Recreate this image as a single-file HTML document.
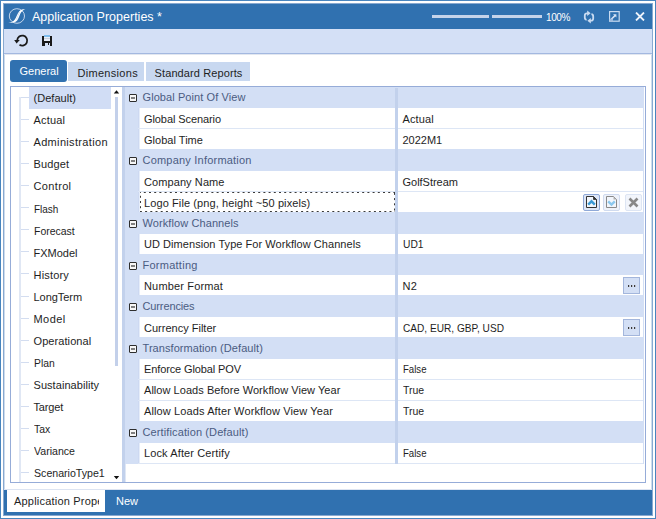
<!DOCTYPE html>
<html><head><meta charset="utf-8"><style>
html,body{margin:0;padding:0;width:656px;height:519px;overflow:hidden;background:#fff}
body{position:relative;font-family:"Liberation Sans",sans-serif;}
body div, body svg{position:absolute;box-sizing:content-box}
.t{white-space:nowrap}
</style></head><body>
<div style="left:0;top:0;width:656px;height:519px;background:#4985be"></div>
<div style="left:1px;top:1px;width:654px;height:517px;background:#ffffff;"></div>
<div style="left:3px;top:3px;width:650px;height:513px;background:#88a9d0;"></div>
<div style="left:4px;top:29px;width:648px;height:461px;background:#ffffff;"></div>
<div style="left:4px;top:54px;width:1px;height:435px;background:#cddbec;"></div>
<div style="left:651px;top:54px;width:1px;height:435px;background:#cddbec;"></div>
<div style="left:4px;top:4px;width:648px;height:25px;background:#3071b0;"></div>
<div style="left:4px;top:29px;width:648px;height:24px;background:#d4e0f6;"></div>
<div style="left:4px;top:53px;width:648px;height:1px;background:#a3b8e0;"></div>
<div style="left:4px;top:54px;width:648px;height:1px;background:#e2e7f0;"></div>
<svg style="left:0px;top:0px" width="30" height="30" viewBox="0 0 30 30">
<ellipse cx="16.9" cy="16" rx="7.6" ry="7.3" fill="none" stroke="#c4d6ec" stroke-width="1.0"/>
<path d="M8.2 22.5 C11 22.8 13.3 22 14.8 19.6 C16.3 17.2 17.3 13.6 19.3 11.2 C20.9 9.5 22.9 9.1 25.4 9.3 C23.3 9.9 22.1 10.9 21 12.6 C19.6 14.8 18.9 18.3 17.2 20.6 C15.3 22.8 12 23.1 8.2 22.5 Z" fill="#ffffff"/>
<path d="M19.6 12.2 C18.4 14 17.6 17.5 16.2 19.6" fill="none" stroke="#a9c3e2" stroke-width="0.5"/>
</svg>
<div class="t" style="left:32px;top:11.17px;font-size:12.5px;line-height:13px;color:#ffffff;">Application Properties *</div>
<div style="left:432px;top:15px;width:57px;height:3px;background:#c5d3ea;"></div>
<div style="left:492px;top:15px;width:50px;height:3px;background:#c5d3ea;"></div>
<div class="t" style="left:546px;top:11.04px;font-size:10px;line-height:13px;color:#ffffff;letter-spacing:-0.4px">100%</div>
<svg style="left:580px;top:8px" width="18" height="18" viewBox="0 0 18 18">
<path d="M8.5 5.3 L7 5.3 Q4.8 5.3 4.8 7.5 L4.8 9.6 Q4.8 11.6 6.6 11.8" fill="none" stroke="#c9dbf1" stroke-width="1.8"/>
<path d="M7.2 2.6 L10.6 5.3 L7.2 8 Z" fill="#c9dbf1"/>
<path d="M9.5 12.7 L11 12.7 Q13.2 12.7 13.2 10.5 L13.2 8.4 Q13.2 6.4 11.4 6.2" fill="none" stroke="#c9dbf1" stroke-width="1.8"/>
<path d="M10.8 10 L7.4 12.7 L10.8 15.4 Z" fill="#c9dbf1"/>
</svg>
<svg style="left:605px;top:8px" width="18" height="18" viewBox="0 0 18 18">
<rect x="4.6" y="3.6" width="9.6" height="9.6" fill="none" stroke="#c9dbf1" stroke-width="1.2"/>
<path d="M6.3 11.3 L10.2 7.4" stroke="#d5e3f5" stroke-width="1.6"/>
<path d="M8 6.2 L11.4 6.2 L11.4 9.6 Z" fill="#d5e3f5"/>
<rect x="4.6" y="10.8" width="3.4" height="2.4" fill="#9ebbdf"/>
</svg>
<svg style="left:635px;top:12px" width="10" height="9" viewBox="0 0 10 9">
<path d="M1 0.5 L9 8.5 M9 0.5 L1 8.5" stroke="#eef3fa" stroke-width="1.8"/>
</svg>
<svg style="left:13px;top:33px" width="17" height="15" viewBox="0 0 17 15">
<path d="M4.2 7.2 A5 5 0 1 1 6.5 11.8" fill="none" stroke="#1a1a1a" stroke-width="1.8"/>
<path d="M1.2 7 L6.8 7 L3.6 10.6 Z" fill="#1a1a1a"/>
</svg>
<div style="left:42px;top:36px;width:10px;height:10px;background:#1a1a1a"></div>
<div style="left:44px;top:35px;width:6px;height:2px;background:#7fbcec"></div>
<div style="left:44px;top:37px;width:6px;height:4px;background:#e8eef8"></div>
<div style="left:45px;top:43px;width:5px;height:3px;background:#d4e0f6"></div>
<div style="left:48px;top:43px;width:1px;height:2px;background:#1a1a1a"></div>
<div style="left:44px;top:38px;width:6px;height:1px;background:#c8d0dc"></div>
<div style="left:10px;top:60px;width:57px;height:22px;background:#3071b0;border-radius:3px"></div>
<div class="t" style="left:19.5px;top:64.99px;font-size:11px;line-height:13px;color:#ffffff;">General</div>
<div style="left:68px;top:62px;width:76px;height:19px;background:#c8d8f0;"></div>
<div class="t" style="left:77.5px;top:66.99px;font-size:11px;line-height:13px;color:#1e1e1e;letter-spacing:0.3px">Dimensions</div>
<div style="left:146px;top:62px;width:104px;height:19px;background:#c8d8f0;"></div>
<div class="t" style="left:154.6px;top:66.99px;font-size:11px;line-height:13px;color:#1e1e1e;letter-spacing:0.1px">Standard Reports</div>
<div style="left:10px;top:86px;width:634px;height:395px;border:1px solid #96acd8;background:#fff"></div>
<div style="left:29px;top:87px;width:82px;height:22px;background:#d1ddf5;"></div>
<div style="left:19px;top:97px;width:2px;height:385px;background:#e0e7f4;"></div>
<div style="left:21px;top:97px;width:8px;height:1px;background:#d3ddf0;"></div>
<div class="t" style="left:33.5px;top:92px;font-size:11px;line-height:13px;letter-spacing:0.037px;color:#1e1e1e;">(Default)</div>
<div style="left:21px;top:119px;width:8px;height:1px;background:#d3ddf0;"></div>
<div class="t" style="left:33.5px;top:114px;font-size:11px;line-height:13px;letter-spacing:0.180px;color:#1e1e1e;">Actual</div>
<div style="left:21px;top:141px;width:8px;height:1px;background:#d3ddf0;"></div>
<div class="t" style="left:33.5px;top:136px;font-size:11px;line-height:13px;letter-spacing:0.331px;color:#1e1e1e;">Administration</div>
<div style="left:21px;top:163px;width:8px;height:1px;background:#d3ddf0;"></div>
<div class="t" style="left:33.5px;top:158px;font-size:11px;line-height:13px;letter-spacing:0.120px;color:#1e1e1e;">Budget</div>
<div style="left:21px;top:185px;width:8px;height:1px;background:#d3ddf0;"></div>
<div class="t" style="left:33.5px;top:180px;font-size:11px;line-height:13px;letter-spacing:0.350px;color:#1e1e1e;">Control</div>
<div style="left:21px;top:207px;width:8px;height:1px;background:#d3ddf0;"></div>
<div class="t" style="left:33.5px;top:203px;font-size:11px;line-height:13px;letter-spacing:0.000px;transform:scaleX(0.9074);transform-origin:0 0;color:#1e1e1e;">Flash</div>
<div style="left:21px;top:229px;width:8px;height:1px;background:#d3ddf0;"></div>
<div class="t" style="left:33.5px;top:225px;font-size:11px;line-height:13px;letter-spacing:0.000px;transform:scaleX(0.9512);transform-origin:0 0;color:#1e1e1e;">Forecast</div>
<div style="left:21px;top:251px;width:8px;height:1px;background:#d3ddf0;"></div>
<div class="t" style="left:33.5px;top:247px;font-size:11px;line-height:13px;letter-spacing:0.000px;color:#1e1e1e;">FXModel</div>
<div style="left:21px;top:273px;width:8px;height:1px;background:#d3ddf0;"></div>
<div class="t" style="left:33.5px;top:269px;font-size:11px;line-height:13px;letter-spacing:0.183px;color:#1e1e1e;">History</div>
<div style="left:21px;top:296px;width:8px;height:1px;background:#d3ddf0;"></div>
<div class="t" style="left:33.5px;top:291px;font-size:11px;line-height:13px;letter-spacing:-0.043px;color:#1e1e1e;">LongTerm</div>
<div style="left:21px;top:318px;width:8px;height:1px;background:#d3ddf0;"></div>
<div class="t" style="left:33.5px;top:313px;font-size:11px;line-height:13px;letter-spacing:0.450px;color:#1e1e1e;">Model</div>
<div style="left:21px;top:340px;width:8px;height:1px;background:#d3ddf0;"></div>
<div class="t" style="left:33.5px;top:335px;font-size:11px;line-height:13px;letter-spacing:0.080px;color:#1e1e1e;">Operational</div>
<div style="left:21px;top:362px;width:8px;height:1px;background:#d3ddf0;"></div>
<div class="t" style="left:33.5px;top:357px;font-size:11px;line-height:13px;letter-spacing:0.000px;transform:scaleX(0.9409);transform-origin:0 0;color:#1e1e1e;">Plan</div>
<div style="left:21px;top:384px;width:8px;height:1px;background:#d3ddf0;"></div>
<div class="t" style="left:33.5px;top:379px;font-size:11px;line-height:13px;letter-spacing:0.054px;color:#1e1e1e;">Sustainability</div>
<div style="left:21px;top:406px;width:8px;height:1px;background:#d3ddf0;"></div>
<div class="t" style="left:33.5px;top:401px;font-size:11px;line-height:13px;letter-spacing:-0.140px;color:#1e1e1e;">Target</div>
<div style="left:21px;top:428px;width:8px;height:1px;background:#d3ddf0;"></div>
<div class="t" style="left:33.5px;top:423px;font-size:11px;line-height:13px;letter-spacing:0.000px;transform:scaleX(0.9471);transform-origin:0 0;color:#1e1e1e;">Tax</div>
<div style="left:21px;top:450px;width:8px;height:1px;background:#d3ddf0;"></div>
<div class="t" style="left:33.5px;top:445px;font-size:11px;line-height:13px;letter-spacing:0.000px;transform:scaleX(0.9628);transform-origin:0 0;color:#1e1e1e;">Variance</div>
<div style="left:21px;top:472px;width:8px;height:1px;background:#d3ddf0;"></div>
<div class="t" style="left:33.5px;top:467px;font-size:11px;line-height:13px;letter-spacing:0.000px;transform:scaleX(0.9644);transform-origin:0 0;color:#1e1e1e;">ScenarioType1</div>
<svg style="left:113px;top:89px" width="7" height="6" viewBox="0 0 7 6"><path d="M0.8 4.6 L3.5 1.3 L6.2 4.6 Z" fill="#111"/></svg>
<div style="left:115px;top:97px;width:3px;height:269px;background:#c3d0ea;"></div>
<svg style="left:113px;top:475px" width="7" height="6" viewBox="0 0 7 6"><path d="M0.8 1 L6.2 1 L3.5 4.3 Z" fill="#111"/></svg>
<div style="left:122px;top:87px;width:3px;height:395px;background:#c2d1ec;"></div>
<div style="left:125px;top:87px;width:519px;height:377px;background:#d3dff5;"></div>
<div style="left:395px;top:88px;width:3px;height:376px;background:#c2d1ec;"></div>
<div style="left:129px;top:94px;width:6px;height:6px;border:1px solid #2e2e2e;border-radius:1px;background:#f6f6f6"></div>
<div style="left:131px;top:97px;width:4px;height:2px;background:#808080;"></div>
<div class="t" style="left:142.5px;top:91px;font-size:11px;line-height:13px;letter-spacing:0.084px;color:#4b5c82;">Global Point Of View</div>
<div style="left:140px;top:108px;width:255px;height:20px;background:#ffffff;"></div>
<div style="left:138px;top:128px;width:257px;height:1px;background:#dde6f5;"></div>
<div style="left:398px;top:128px;width:245px;height:1px;background:#dde6f5;"></div>
<div style="left:138px;top:108px;width:1px;height:20px;background:#cdd9f2;"></div>
<div style="left:139px;top:108px;width:1px;height:20px;background:#e6edf9;"></div>
<div style="left:398px;top:108px;width:245px;height:20px;background:#ffffff;"></div>
<div class="t" style="left:144px;top:113px;font-size:11px;line-height:13px;letter-spacing:-0.086px;color:#1e1e1e;">Global Scenario</div>
<div class="t" style="left:402.5px;top:113px;font-size:11px;line-height:13px;letter-spacing:0.120px;color:#1e1e1e;">Actual</div>
<div style="left:140px;top:129px;width:255px;height:20px;background:#ffffff;"></div>
<div style="left:138px;top:129px;width:1px;height:20px;background:#cdd9f2;"></div>
<div style="left:139px;top:129px;width:1px;height:20px;background:#e6edf9;"></div>
<div style="left:398px;top:129px;width:245px;height:20px;background:#ffffff;"></div>
<div class="t" style="left:144px;top:134px;font-size:11px;line-height:13px;letter-spacing:0.020px;color:#1e1e1e;">Global Time</div>
<div class="t" style="left:402.5px;top:134px;font-size:11px;line-height:13px;letter-spacing:-0.020px;color:#1e1e1e;">2022M1</div>
<div style="left:129px;top:157px;width:6px;height:6px;border:1px solid #2e2e2e;border-radius:1px;background:#f6f6f6"></div>
<div style="left:131px;top:160px;width:4px;height:2px;background:#808080;"></div>
<div class="t" style="left:142.5px;top:154px;font-size:11px;line-height:13px;letter-spacing:0.211px;color:#4b5c82;">Company Information</div>
<div style="left:140px;top:171px;width:255px;height:20px;background:#ffffff;"></div>
<div style="left:138px;top:191px;width:257px;height:1px;background:#dde6f5;"></div>
<div style="left:398px;top:191px;width:245px;height:1px;background:#dde6f5;"></div>
<div style="left:138px;top:171px;width:1px;height:20px;background:#cdd9f2;"></div>
<div style="left:139px;top:171px;width:1px;height:20px;background:#e6edf9;"></div>
<div style="left:398px;top:171px;width:245px;height:20px;background:#ffffff;"></div>
<div class="t" style="left:144px;top:176px;font-size:11px;line-height:13px;letter-spacing:0.091px;color:#1e1e1e;">Company Name</div>
<div class="t" style="left:402.5px;top:176px;font-size:11px;line-height:13px;letter-spacing:-0.022px;color:#1e1e1e;">GolfStream</div>
<div style="left:140px;top:192px;width:255px;height:20px;background:#ffffff;"></div>
<div style="left:138px;top:192px;width:1px;height:20px;background:#cdd9f2;"></div>
<div style="left:139px;top:192px;width:1px;height:20px;background:#e6edf9;"></div>
<div style="left:398px;top:192px;width:245px;height:20px;background:#ffffff;"></div>
<div class="t" style="left:144px;top:197px;font-size:11px;line-height:13px;letter-spacing:0.100px;color:#1e1e1e;">Logo File (png, height ~50 pixels)</div>
<div style="left:129px;top:220px;width:6px;height:6px;border:1px solid #2e2e2e;border-radius:1px;background:#f6f6f6"></div>
<div style="left:131px;top:223px;width:4px;height:2px;background:#808080;"></div>
<div class="t" style="left:142.5px;top:217px;font-size:11px;line-height:13px;letter-spacing:0.094px;color:#4b5c82;">Workflow Channels</div>
<div style="left:140px;top:234px;width:255px;height:20px;background:#ffffff;"></div>
<div style="left:138px;top:234px;width:1px;height:20px;background:#cdd9f2;"></div>
<div style="left:139px;top:234px;width:1px;height:20px;background:#e6edf9;"></div>
<div style="left:398px;top:234px;width:245px;height:20px;background:#ffffff;"></div>
<div class="t" style="left:144px;top:238px;font-size:11px;line-height:13px;letter-spacing:0.050px;color:#1e1e1e;">UD Dimension Type For Workflow Channels</div>
<div class="t" style="left:402.5px;top:238px;font-size:11px;line-height:13px;letter-spacing:0.000px;transform:scaleX(0.9318);transform-origin:0 0;color:#1e1e1e;">UD1</div>
<div style="left:129px;top:262px;width:6px;height:6px;border:1px solid #2e2e2e;border-radius:1px;background:#f6f6f6"></div>
<div style="left:131px;top:265px;width:4px;height:2px;background:#808080;"></div>
<div class="t" style="left:142.5px;top:259px;font-size:11px;line-height:13px;letter-spacing:0.256px;color:#4b5c82;">Formatting</div>
<div style="left:140px;top:275px;width:255px;height:20px;background:#ffffff;"></div>
<div style="left:138px;top:275px;width:1px;height:20px;background:#cdd9f2;"></div>
<div style="left:139px;top:275px;width:1px;height:20px;background:#e6edf9;"></div>
<div style="left:398px;top:275px;width:245px;height:20px;background:#ffffff;"></div>
<div class="t" style="left:144px;top:280px;font-size:11px;line-height:13px;letter-spacing:0.158px;color:#1e1e1e;">Number Format</div>
<div class="t" style="left:402.5px;top:280px;font-size:11px;line-height:13px;letter-spacing:0.200px;color:#1e1e1e;">N2</div>
<div style="left:129px;top:303px;width:6px;height:6px;border:1px solid #2e2e2e;border-radius:1px;background:#f6f6f6"></div>
<div style="left:131px;top:306px;width:4px;height:2px;background:#808080;"></div>
<div class="t" style="left:142.5px;top:300px;font-size:11px;line-height:13px;letter-spacing:-0.122px;color:#4b5c82;">Currencies</div>
<div style="left:140px;top:317px;width:255px;height:20px;background:#ffffff;"></div>
<div style="left:138px;top:317px;width:1px;height:20px;background:#cdd9f2;"></div>
<div style="left:139px;top:317px;width:1px;height:20px;background:#e6edf9;"></div>
<div style="left:398px;top:317px;width:245px;height:20px;background:#ffffff;"></div>
<div class="t" style="left:144px;top:322px;font-size:11px;line-height:13px;letter-spacing:0.007px;color:#1e1e1e;">Currency Filter</div>
<div class="t" style="left:402.5px;top:322px;font-size:11px;line-height:13px;letter-spacing:0.000px;transform:scaleX(0.9191);transform-origin:0 0;color:#1e1e1e;">CAD, EUR, GBP, USD</div>
<div style="left:129px;top:345px;width:6px;height:6px;border:1px solid #2e2e2e;border-radius:1px;background:#f6f6f6"></div>
<div style="left:131px;top:348px;width:4px;height:2px;background:#808080;"></div>
<div class="t" style="left:142.5px;top:342px;font-size:11px;line-height:13px;letter-spacing:0.065px;color:#4b5c82;">Transformation (Default)</div>
<div style="left:140px;top:359px;width:255px;height:20px;background:#ffffff;"></div>
<div style="left:138px;top:379px;width:257px;height:1px;background:#dde6f5;"></div>
<div style="left:398px;top:379px;width:245px;height:1px;background:#dde6f5;"></div>
<div style="left:138px;top:359px;width:1px;height:20px;background:#cdd9f2;"></div>
<div style="left:139px;top:359px;width:1px;height:20px;background:#e6edf9;"></div>
<div style="left:398px;top:359px;width:245px;height:20px;background:#ffffff;"></div>
<div class="t" style="left:144px;top:363px;font-size:11px;line-height:13px;letter-spacing:-0.118px;color:#1e1e1e;">Enforce Global POV</div>
<div class="t" style="left:402.5px;top:363px;font-size:11px;line-height:13px;letter-spacing:0.000px;transform:scaleX(0.8741);transform-origin:0 0;color:#1e1e1e;">False</div>
<div style="left:140px;top:380px;width:255px;height:20px;background:#ffffff;"></div>
<div style="left:138px;top:400px;width:257px;height:1px;background:#dde6f5;"></div>
<div style="left:398px;top:400px;width:245px;height:1px;background:#dde6f5;"></div>
<div style="left:138px;top:380px;width:1px;height:20px;background:#cdd9f2;"></div>
<div style="left:139px;top:380px;width:1px;height:20px;background:#e6edf9;"></div>
<div style="left:398px;top:380px;width:245px;height:20px;background:#ffffff;"></div>
<div class="t" style="left:144px;top:384px;font-size:11px;line-height:13px;letter-spacing:0.047px;color:#1e1e1e;">Allow Loads Before Workflow View Year</div>
<div class="t" style="left:402.5px;top:384px;font-size:11px;line-height:13px;letter-spacing:0.000px;transform:scaleX(0.9500);transform-origin:0 0;color:#1e1e1e;">True</div>
<div style="left:140px;top:401px;width:255px;height:20px;background:#ffffff;"></div>
<div style="left:138px;top:401px;width:1px;height:20px;background:#cdd9f2;"></div>
<div style="left:139px;top:401px;width:1px;height:20px;background:#e6edf9;"></div>
<div style="left:398px;top:401px;width:245px;height:20px;background:#ffffff;"></div>
<div class="t" style="left:144px;top:405px;font-size:11px;line-height:13px;letter-spacing:0.114px;color:#1e1e1e;">Allow Loads After Workflow View Year</div>
<div class="t" style="left:402.5px;top:405px;font-size:11px;line-height:13px;letter-spacing:0.000px;transform:scaleX(0.9500);transform-origin:0 0;color:#1e1e1e;">True</div>
<div style="left:129px;top:429px;width:6px;height:6px;border:1px solid #2e2e2e;border-radius:1px;background:#f6f6f6"></div>
<div style="left:131px;top:432px;width:4px;height:2px;background:#808080;"></div>
<div class="t" style="left:142.5px;top:426px;font-size:11px;line-height:13px;letter-spacing:0.118px;color:#4b5c82;">Certification (Default)</div>
<div style="left:140px;top:443px;width:255px;height:20px;background:#ffffff;"></div>
<div style="left:138px;top:443px;width:1px;height:20px;background:#cdd9f2;"></div>
<div style="left:139px;top:443px;width:1px;height:20px;background:#e6edf9;"></div>
<div style="left:398px;top:443px;width:245px;height:20px;background:#ffffff;"></div>
<div class="t" style="left:144px;top:447px;font-size:11px;line-height:13px;letter-spacing:0.118px;color:#1e1e1e;">Lock After Certify</div>
<div class="t" style="left:402.5px;top:447px;font-size:11px;line-height:13px;letter-spacing:0.000px;transform:scaleX(0.8741);transform-origin:0 0;color:#1e1e1e;">False</div>
<div style="left:623px;top:277px;width:15px;height:15px;border:1px solid #a3b6dc;background:#d3dff5"></div>
<div style="left:628px;top:285px;width:1px;height:2px;background:#3a3a3a"></div>
<div style="left:629px;top:285px;width:1px;height:2px;background:#b9bdc8"></div>
<div style="left:631px;top:285px;width:1px;height:2px;background:#3a3a3a"></div>
<div style="left:632px;top:285px;width:1px;height:2px;background:#b9bdc8"></div>
<div style="left:634px;top:285px;width:1px;height:2px;background:#3a3a3a"></div>
<div style="left:635px;top:285px;width:1px;height:2px;background:#b9bdc8"></div>
<div style="left:623px;top:319px;width:15px;height:15px;border:1px solid #a3b6dc;background:#d3dff5"></div>
<div style="left:628px;top:327px;width:1px;height:2px;background:#3a3a3a"></div>
<div style="left:629px;top:327px;width:1px;height:2px;background:#b9bdc8"></div>
<div style="left:631px;top:327px;width:1px;height:2px;background:#3a3a3a"></div>
<div style="left:632px;top:327px;width:1px;height:2px;background:#b9bdc8"></div>
<div style="left:634px;top:327px;width:1px;height:2px;background:#3a3a3a"></div>
<div style="left:635px;top:327px;width:1px;height:2px;background:#b9bdc8"></div>
<svg style="left:140px;top:192px" width="255" height="20"><g stroke="#3a3a3a" stroke-width="1" stroke-dasharray="2 3.2"><line x1="0" y1="0.5" x2="255" y2="0.5" stroke-dashoffset="1.4"/><line x1="0" y1="19.5" x2="255" y2="19.5" stroke-dashoffset="0.1"/><line x1="0.5" y1="0" x2="0.5" y2="20" stroke-dashoffset="1.4"/><line x1="254.5" y1="0" x2="254.5" y2="20" stroke-dashoffset="4.3"/></g></svg>
<div style="left:583px;top:194px;width:15px;height:15px;border:1px solid #8fa9d8;border-radius:2px;background:#dde6f7"></div>
<div style="left:603px;top:194px;width:15px;height:15px;border:1px solid #d0dbef;border-radius:2px;background:#eef2fa"></div>
<div style="left:625px;top:194px;width:15px;height:15px;border:1px solid #dde5f3;border-radius:2px;background:#f2f5fb"></div>
<svg style="left:585px;top:196px" width="13" height="13" viewBox="0 0 13 13">
<path d="M1.5 0.5 H8.5 L11.5 3.5 V11.5 H1.5 Z" fill="#f2f6fc" stroke="#333" stroke-width="1"/>
<path d="M8.5 0.5 L11.5 3.5 L8.5 3.5 Z" fill="#333" stroke="#333" stroke-width="0.8"/>
<path d="M3.2 8.6 L6.5 5.3 L9.8 8.6" fill="none" stroke="#3b9ad6" stroke-width="2.4"/>
</svg>
<svg style="left:605px;top:196px" width="13" height="13" viewBox="0 0 13 13">
<path d="M1.5 0.5 H8.5 L11.5 3.5 V11.5 H1.5 Z" fill="#f2f6fc" stroke="#8a8a8a" stroke-width="1"/>
<path d="M8.5 0.5 L11.5 3.5 L8.5 3.5 Z" fill="#b0b0b0"/>
<path d="M3.2 5.3 L6.5 8.6 L9.8 5.3" fill="none" stroke="#8cc8ee" stroke-width="2.4"/>
</svg>
<svg style="left:628px;top:197px" width="11" height="11" viewBox="0 0 11 11">
<path d="M1.5 1.5 L9.5 9.5 M9.5 1.5 L1.5 9.5" stroke="#888" stroke-width="2.6"/>
</svg>
<div style="left:138px;top:463px;width:257px;height:1px;background:#dde6f5;"></div>
<div style="left:398px;top:463px;width:245px;height:1px;background:#dde6f5;"></div>
<div style="left:125px;top:464px;width:1px;height:18px;background:#dfe7f5;"></div>
<div style="left:4px;top:489px;width:648px;height:1px;background:#dce4f2;"></div>
<div style="left:4px;top:490px;width:648px;height:25px;background:#3071b0;"></div>
<div style="left:7px;top:490px;width:98px;height:22px;background:#ffffff;"></div>
<div style="left:7px;top:490px;width:92px;height:22px;overflow:hidden">
<div class="t" style="left:7px;top:4.69px;font-size:11px;line-height:13px;color:#1e1e1e;letter-spacing:0.2px">Application Properties</div>
</div>
<div class="t" style="left:116px;top:494.89px;font-size:11px;line-height:13px;color:#ffffff;">New</div>
</body></html>
